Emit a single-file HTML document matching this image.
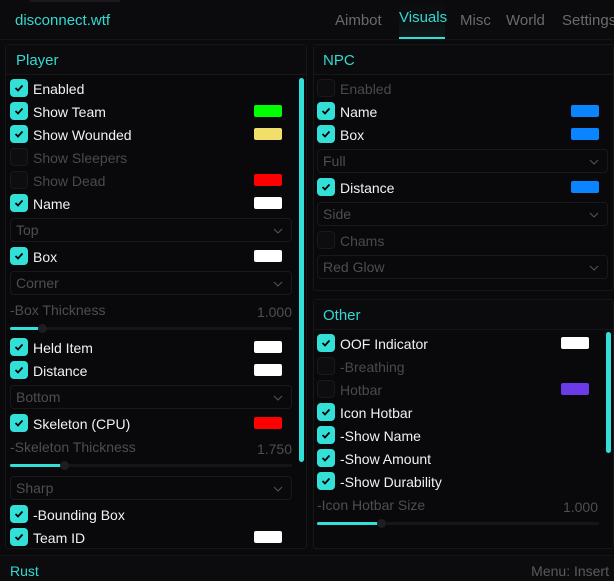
<!DOCTYPE html>
<html><head><meta charset="utf-8"><style>
*{margin:0;padding:0;box-sizing:border-box}
body{width:614px;height:581px;background:#0a090c;font-family:"Liberation Sans","Noto Sans CJK JP",sans-serif;font-size:14px;color:#fff;position:relative;overflow:hidden}
.a{position:absolute;white-space:nowrap}
.panel{position:absolute;border:1px solid #17171a;border-radius:3px;background:#09080b}
.ph{position:absolute;left:0;right:0;top:0;height:30px;border-bottom:1px solid #17171a;background:#0b0b0d}
.cb{position:absolute;width:18px;height:18px;border-radius:4px;background:#33e0d8}
.cb svg{position:absolute;left:4px;top:4px}
.cb.off{background:#0d0d10;border:1px solid #1a1a1d}
.t{position:absolute;font-size:14px;line-height:18px;color:#f2f2f2;top:1px}
.t.off{color:#4a4a4e}
.sw{position:absolute;width:28px;height:12px;border-radius:2px}
.dd{position:absolute;height:24px;border:1px solid #19191c;border-radius:4px;color:#4e4e52;font-size:14px;line-height:23px;padding-left:5px}
.dd svg{position:absolute;right:8px;top:9px}
.lab{position:absolute;color:#4e4e52;font-size:14px;line-height:18px}
.sl{position:absolute;height:3px;background:#16161a;border-radius:2px}
.sl i{position:absolute;left:0;top:0;height:3px;background:#33e0d8;border-radius:2px}
.sl b{position:absolute;top:-3px;width:9px;height:9px;border-radius:50%;background:#1e1e22}
.scr{position:absolute;width:5px;background:#33e0d8;border-radius:3px}
.cy{color:#33d9d2}
.r{position:absolute;left:0;top:0}
</style></head><body>
<div class="a" style="left:0;top:0;width:614px;height:40px;background:#0b0b0d;border-bottom:1px solid #141417"></div>
<div class="a" style="left:30px;top:0;width:90px;height:2px;background:#1a1a1e"></div>
<div class="a cy" style="left:15px;top:11px;font-size:15px;line-height:20px">disconnect.wtf</div>
<div class="a" style="left:335px;top:11px;color:#6a6a6e;font-size:15px;line-height:20px">Aimbot</div>
<div class="a" style="left:399px;top:2px;width:46px;height:37px;background:linear-gradient(#0b0b0d,#0f1819)"></div>
<div class="a cy" style="left:399px;top:8px;font-size:15px;line-height:20px">Visuals</div>
<div class="a" style="left:399px;top:37px;width:46px;height:2px;background:#33e0d8"></div>
<div class="a" style="left:460px;top:11px;color:#6a6a6e;font-size:15px;line-height:20px">Misc</div>
<div class="a" style="left:506px;top:11px;color:#6a6a6e;font-size:15px;line-height:20px">World</div>
<div class="a" style="left:562px;top:11px;color:#6a6a6e;font-size:15px;line-height:20px">Settings</div>

<div class="panel" style="left:5px;top:44px;width:302px;height:505px"><div class="ph"></div>
<div class="a cy" style="left:10px;top:6px;font-size:15px;line-height:20px">Player</div></div>
<div class="scr" style="left:299px;top:78px;height:384px"></div>

<div class="panel" style="left:313px;top:44px;width:301px;height:247px"><div class="ph"></div>
<div class="a cy" style="left:9px;top:6px;font-size:15px;line-height:20px">NPC</div></div>

<div class="panel" style="left:313px;top:299px;width:301px;height:250px"><div class="ph"></div>
<div class="a cy" style="left:9px;top:6px;font-size:15px;line-height:20px">Other</div></div>
<div class="scr" style="left:606px;top:332px;height:121px"></div>

<div class="a" style="left:0;top:555px;width:614px;height:26px;background:#0c0c0e;border-top:1px solid #141417"></div>
<div class="a cy" style="left:10px;top:562px;font-size:14px;line-height:18px">Rust</div>
<div class="a" style="right:5px;top:562px;color:#5a5a5e;font-size:14px;line-height:18px">Menu: Insert</div>

<div class="cb" style="left:10px;top:79px"><svg width="10" height="10"><path d="M1.5 5l2.5 2.5 4.5-5" stroke="#000" stroke-width="1.8" fill="none"/></svg></div><div class="t" style="left:33px;top:80px">Enabled</div>
<div class="cb" style="left:10px;top:102px"><svg width="10" height="10"><path d="M1.5 5l2.5 2.5 4.5-5" stroke="#000" stroke-width="1.8" fill="none"/></svg></div><div class="t" style="left:33px;top:103px">Show Team</div><div class="sw" style="left:254px;top:105px;background:#00ff00"></div>
<div class="cb" style="left:10px;top:125px"><svg width="10" height="10"><path d="M1.5 5l2.5 2.5 4.5-5" stroke="#000" stroke-width="1.8" fill="none"/></svg></div><div class="t" style="left:33px;top:126px">Show Wounded</div><div class="sw" style="left:254px;top:128px;background:#f2de6a"></div>
<div class="cb off" style="left:10px;top:148px"></div><div class="t off" style="left:33px;top:149px">Show Sleepers</div>
<div class="cb off" style="left:10px;top:171px"></div><div class="t off" style="left:33px;top:172px">Show Dead</div><div class="sw" style="left:254px;top:174px;background:#ff0000"></div>
<div class="cb" style="left:10px;top:194px"><svg width="10" height="10"><path d="M1.5 5l2.5 2.5 4.5-5" stroke="#000" stroke-width="1.8" fill="none"/></svg></div><div class="t" style="left:33px;top:195px">Name</div><div class="sw" style="left:254px;top:197px;background:#fff"></div>
<div class="dd" style="left:10px;top:218px;width:282px">Top<svg width="10" height="6"><path d="M1 1l4 4 4-4" stroke="#555" fill="none"/></svg></div>
<div class="cb" style="left:10px;top:247px"><svg width="10" height="10"><path d="M1.5 5l2.5 2.5 4.5-5" stroke="#000" stroke-width="1.8" fill="none"/></svg></div><div class="t" style="left:33px;top:248px">Box</div><div class="sw" style="left:254px;top:250px;background:#fff"></div>
<div class="dd" style="left:10px;top:271px;width:282px">Corner<svg width="10" height="6"><path d="M1 1l4 4 4-4" stroke="#555" fill="none"/></svg></div>
<div class="lab" style="left:10px;top:301px">-Box Thickness</div><div class="lab" style="right:322px;top:303px">1.000</div>
<div class="sl" style="left:10px;top:327px;width:282px"><i style="width:30px"></i><b style="left:28px"></b></div>
<div class="cb" style="left:10px;top:338px"><svg width="10" height="10"><path d="M1.5 5l2.5 2.5 4.5-5" stroke="#000" stroke-width="1.8" fill="none"/></svg></div><div class="t" style="left:33px;top:339px">Held Item</div><div class="sw" style="left:254px;top:341px;background:#fff"></div>
<div class="cb" style="left:10px;top:361px"><svg width="10" height="10"><path d="M1.5 5l2.5 2.5 4.5-5" stroke="#000" stroke-width="1.8" fill="none"/></svg></div><div class="t" style="left:33px;top:362px">Distance</div><div class="sw" style="left:254px;top:364px;background:#fff"></div>
<div class="dd" style="left:10px;top:385px;width:282px">Bottom<svg width="10" height="6"><path d="M1 1l4 4 4-4" stroke="#555" fill="none"/></svg></div>
<div class="cb" style="left:10px;top:414px"><svg width="10" height="10"><path d="M1.5 5l2.5 2.5 4.5-5" stroke="#000" stroke-width="1.8" fill="none"/></svg></div><div class="t" style="left:33px;top:415px">Skeleton (CPU)</div><div class="sw" style="left:254px;top:417px;background:#f00"></div>
<div class="lab" style="left:10px;top:438px">-Skeleton Thickness</div><div class="lab" style="right:322px;top:440px">1.750</div>
<div class="sl" style="left:10px;top:464px;width:282px"><i style="width:52px"></i><b style="left:50px"></b></div>
<div class="dd" style="left:10px;top:476px;width:282px">Sharp<svg width="10" height="6"><path d="M1 1l4 4 4-4" stroke="#555" fill="none"/></svg></div>
<div class="cb" style="left:10px;top:505px"><svg width="10" height="10"><path d="M1.5 5l2.5 2.5 4.5-5" stroke="#000" stroke-width="1.8" fill="none"/></svg></div><div class="t" style="left:33px;top:506px">-Bounding Box</div>
<div class="cb" style="left:10px;top:528px"><svg width="10" height="10"><path d="M1.5 5l2.5 2.5 4.5-5" stroke="#000" stroke-width="1.8" fill="none"/></svg></div><div class="t" style="left:33px;top:529px">Team ID</div><div class="sw" style="left:254px;top:531px;background:#fff"></div>

<div class="cb off" style="left:317px;top:79px"></div><div class="t off" style="left:340px;top:80px">Enabled</div>
<div class="cb" style="left:317px;top:102px"><svg width="10" height="10"><path d="M1.5 5l2.5 2.5 4.5-5" stroke="#000" stroke-width="1.8" fill="none"/></svg></div><div class="t" style="left:340px;top:103px">Name</div><div class="sw" style="left:571px;top:105px;background:#0a84ff"></div>
<div class="cb" style="left:317px;top:125px"><svg width="10" height="10"><path d="M1.5 5l2.5 2.5 4.5-5" stroke="#000" stroke-width="1.8" fill="none"/></svg></div><div class="t" style="left:340px;top:126px">Box</div><div class="sw" style="left:571px;top:128px;background:#0a84ff"></div>
<div class="dd" style="left:317px;top:149px;width:291px">Full<svg width="10" height="6"><path d="M1 1l4 4 4-4" stroke="#555" fill="none"/></svg></div>
<div class="cb" style="left:317px;top:178px"><svg width="10" height="10"><path d="M1.5 5l2.5 2.5 4.5-5" stroke="#000" stroke-width="1.8" fill="none"/></svg></div><div class="t" style="left:340px;top:179px">Distance</div><div class="sw" style="left:571px;top:181px;background:#0a84ff"></div>
<div class="dd" style="left:317px;top:202px;width:291px">Side<svg width="10" height="6"><path d="M1 1l4 4 4-4" stroke="#555" fill="none"/></svg></div>
<div class="cb off" style="left:317px;top:231px"></div><div class="t off" style="left:340px;top:232px">Chams</div>
<div class="dd" style="left:317px;top:255px;width:291px">Red Glow<svg width="10" height="6"><path d="M1 1l4 4 4-4" stroke="#555" fill="none"/></svg></div>

<div class="cb" style="left:317px;top:334px"><svg width="10" height="10"><path d="M1.5 5l2.5 2.5 4.5-5" stroke="#000" stroke-width="1.8" fill="none"/></svg></div><div class="t" style="left:340px;top:335px">OOF Indicator</div><div class="sw" style="left:561px;top:337px;background:#fff"></div>
<div class="cb off" style="left:317px;top:357px"></div><div class="t off" style="left:340px;top:358px">-Breathing</div>
<div class="cb off" style="left:317px;top:380px"></div><div class="t off" style="left:340px;top:381px">Hotbar</div><div class="sw" style="left:561px;top:383px;background:#6a3be6"></div>
<div class="cb" style="left:317px;top:403px"><svg width="10" height="10"><path d="M1.5 5l2.5 2.5 4.5-5" stroke="#000" stroke-width="1.8" fill="none"/></svg></div><div class="t" style="left:340px;top:404px">Icon Hotbar</div>
<div class="cb" style="left:317px;top:426px"><svg width="10" height="10"><path d="M1.5 5l2.5 2.5 4.5-5" stroke="#000" stroke-width="1.8" fill="none"/></svg></div><div class="t" style="left:340px;top:427px">-Show Name</div>
<div class="cb" style="left:317px;top:449px"><svg width="10" height="10"><path d="M1.5 5l2.5 2.5 4.5-5" stroke="#000" stroke-width="1.8" fill="none"/></svg></div><div class="t" style="left:340px;top:450px">-Show Amount</div>
<div class="cb" style="left:317px;top:472px"><svg width="10" height="10"><path d="M1.5 5l2.5 2.5 4.5-5" stroke="#000" stroke-width="1.8" fill="none"/></svg></div><div class="t" style="left:340px;top:473px">-Show Durability</div>
<div class="lab" style="left:317px;top:496px">-Icon Hotbar Size</div><div class="lab" style="right:16px;top:498px">1.000</div>
<div class="sl" style="left:317px;top:522px;width:282px"><i style="width:63px"></i><b style="left:60px"></b></div>
</body></html>
